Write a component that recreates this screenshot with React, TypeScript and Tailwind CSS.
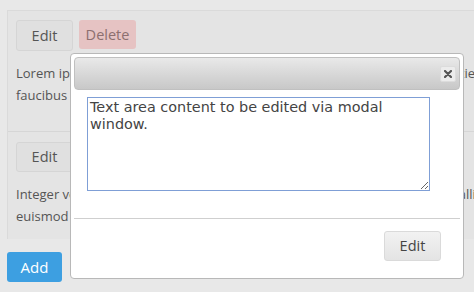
export default function App() {
  return (
    <div className="relative h-[292px] w-[474px] overflow-hidden bg-[#e8e8e8] font-['Open_Sans',sans-serif] text-[13px] text-[#555]">
      <div className="ml-[7px] mt-[10px] border-l border-t border-[#dadada]">
        <div className="border-b border-[#d6d6d6] bg-[#e4e4e4] pb-[25px] pl-[8px] pt-[9px]">
          <div className="flex gap-[6px]">
            <button className="h-[31px] w-[57px] rounded-[3px] border border-[#d5d5d5] bg-[#e0e0e0] text-[14.5px] text-[#555]">
              Edit
            </button>
            <button className="h-[29px] w-[57px] rounded-[3px] bg-[#e6c3c3] text-[14.5px] text-[#8c6f6f]">
              Delete
            </button>
          </div>
          <div className="mr-[-1px] mt-[11px] whitespace-nowrap leading-[22px]">
            <div className="flex justify-between">
              <span>Lorem ipsum dolor sit amet, consectetur</span>
              <span>molestie</span>
            </div>
            <div>faucibus a tortor in, sodales varius lectus.</div>
          </div>
        </div>
        <div className="bg-[#e4e4e4] pb-[12px] pl-[8px] pt-[10px]">
          <button className="h-[30px] w-[57px] rounded-[3px] border border-[#d5d5d5] bg-[#e0e0e0] text-[14.5px] text-[#555]">
            Edit
          </button>
          <div className="mr-[-8px] mt-[11px] whitespace-nowrap leading-[22px]">
            <div className="flex justify-between">
              <span>Integer vel nunc id lorem</span>
              <span>convallis</span>
            </div>
            <div>
              euismod <span className="text-[#d9a24a]">lobortis</span> sed ac tellus.
            </div>
          </div>
        </div>
      </div>
      <button className="ml-[7px] mt-[13px] h-[30px] w-[55px] rounded-[3px] bg-[#3d9fe1] text-[15px] text-white">
        Add
      </button>

      <div className="absolute left-[70px] top-[53px] flex h-[226px] w-[394px] flex-col rounded-[4px] border border-[#b8b8b8] bg-white p-[3px]">
        <div className="flex h-[33px] items-center justify-end rounded-[4px] border border-[#c0c0c0] bg-gradient-to-b from-[#e9e9e9] to-[#c8c8c8] pr-[3px]">
          <div className="flex h-[16px] w-[16px] items-center justify-center rounded-[2px] border border-[#dcdcdc] bg-[#ececec]">
            <svg width="8" height="8" viewBox="0 0 8 8">
              <path d="M1 1L7 7M7 1L1 7" stroke="#555" strokeWidth="2.2" strokeLinecap="round" />
            </svg>
          </div>
        </div>
        <div className="px-[13px] pt-[7px]">
          <textarea
            defaultValue="Text area content to be edited via modal window."
            className="block h-[94px] w-[343px] resize-y border border-[#7f9fd6] px-[2px] py-[1px] font-['DejaVu_Sans',sans-serif] text-[14.4px] leading-[17px] text-[#444] outline-none"
          />
        </div>
        <div className="mt-[27px] flex flex-1 items-start justify-end border-t border-[#cfcfcf] pr-[19px] pt-[12px]">
          <button className="h-[30px] w-[57px] rounded-[3px] border border-[#dadada] bg-gradient-to-b from-[#f2f2f2] to-[#e4e4e4] font-['Open_Sans',sans-serif] text-[14.5px] text-[#444]">
            Edit
          </button>
        </div>
      </div>
    </div>
  );
}
